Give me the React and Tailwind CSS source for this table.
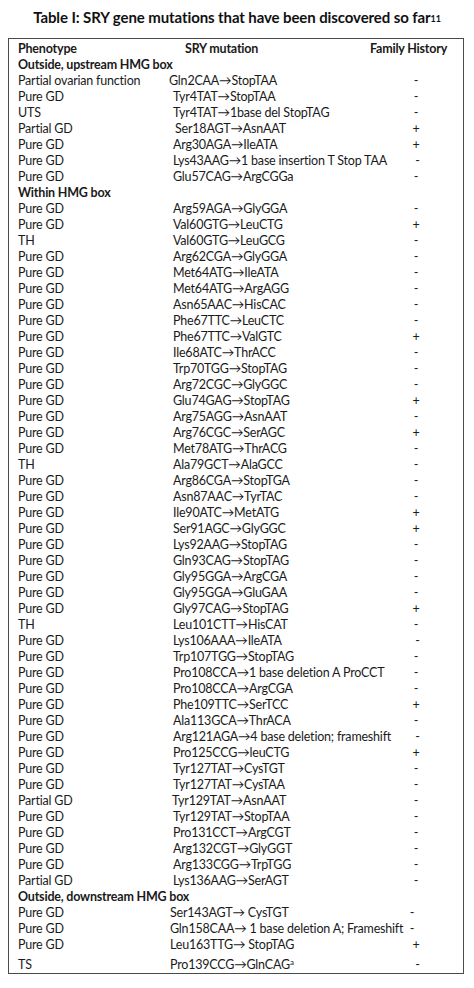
import React from "react";

const rows = [
  { t: "h", p: "Outside, upstream HMG box" },
  { p: "Partial ovarian function", m: "Gln2CAA→StopTAA", f: "-", mo: "ml-[-4px]" },
  { p: "Pure GD", m: "Tyr4TAT→StopTAA", f: "-" },
  { p: "UTS", m: "Tyr4TAT→1base del StopTAG", f: "-" },
  { p: "Partial GD", m: "Ser18AGT→AsnAAT", f: "+", mo: "ml-[2px]" },
  { p: "Pure GD", m: "Arg30AGA→IleATA", f: "+" },
  { p: "Pure GD", m: "Lys43AAG→1 base insertion T Stop TAA", f: "-", fo: "ml-[3px]" },
  { p: "Pure GD", m: "Glu57CAG→ArgCGGa", f: "-" },
  { t: "h", p: "Within HMG box" },
  { p: "Pure GD", m: "Arg59AGA→GlyGGA", f: "-" },
  { p: "Pure GD", m: "Val60GTG→LeuCTG", f: "+" },
  { p: "TH", m: "Val60GTG→LeuGCG", f: "-" },
  { p: "Pure GD", m: "Arg62CGA→GlyGGA", f: "-" },
  { p: "Pure GD", m: "Met64ATG→IleATA", f: "-" },
  { p: "Pure GD", m: "Met64ATG→ArgAGG", f: "-" },
  { p: "Pure GD", m: "Asn65AAC→HisCAC", f: "-" },
  { p: "Pure GD", m: "Phe67TTC→LeuCTC", f: "-" },
  { p: "Pure GD", m: "Phe67TTC→ValGTC", f: "+" },
  { p: "Pure GD", m: "Ile68ATC→ThrACC", f: "-" },
  { p: "Pure GD", m: "Trp70TGG→StopTAG", f: "-" },
  { p: "Pure GD", m: "Arg72CGC→GlyGGC", f: "-" },
  { p: "Pure GD", m: "Glu74GAG→StopTAG", f: "+" },
  { p: "Pure GD", m: "Arg75AGG→AsnAAT", f: "-" },
  { p: "Pure GD", m: "Arg76CGC→SerAGC", f: "+" },
  { p: "Pure GD", m: "Met78ATG→ThrACG", f: "-" },
  { p: "TH", m: "Ala79GCT→AlaGCC", f: "-" },
  { p: "Pure GD", m: "Arg86CGA→StopTGA", f: "-" },
  { p: "Pure GD", m: "Asn87AAC→TyrTAC", f: "-" },
  { p: "Pure GD", m: "Ile90ATC→MetATG", f: "+" },
  { p: "Pure GD", m: "Ser91AGC→GlyGGC", f: "+" },
  { p: "Pure GD", m: "Lys92AAG→StopTAG", f: "-" },
  { p: "Pure GD", m: "Gln93CAG→StopTAG", f: "-" },
  { p: "Pure GD", m: "Gly95GGA→ArgCGA", f: "-" },
  { p: "Pure GD", m: "Gly95GGA→GluGAA", f: "-" },
  { p: "Pure GD", m: "Gly97CAG→StopTAG", f: "+" },
  { p: "TH", m: "Leu101CTT→HisCAT", f: "-" },
  { p: "Pure GD", m: "Lys106AAA→IleATA", f: "-", fo: "ml-[3px]" },
  { p: "Pure GD", m: "Trp107TGG→StopTAG", f: "-" },
  { p: "Pure GD", m: "Pro108CCA→1 base deletion A ProCCT", f: "-" },
  { p: "Pure GD", m: "Pro108CCA→ArgCGA", f: "-" },
  { p: "Pure GD", m: "Phe109TTC→SerTCC", f: "+" },
  { p: "Pure GD", m: "Ala113GCA→ThrACA", f: "-" },
  { p: "Pure GD", m: "Arg121AGA→4 base deletion; frameshift", f: "-", fo: "ml-[3px]" },
  { p: "Pure GD", m: "Pro125CCG→leuCTG", f: "+" },
  { p: "Pure GD", m: "Tyr127TAT→CysTGT", f: "-" },
  { p: "Pure GD", m: "Tyr127TAT→CysTAA", f: "-" },
  { p: "Partial GD", m: "Tyr129TAT→AsnAAT", f: "-", mo: "ml-[-1px]" },
  { p: "Pure GD", m: "Tyr129TAT→StopTAA", f: "-" },
  { p: "Pure GD", m: "Pro131CCT→ArgCGT", f: "-" },
  { p: "Pure GD", m: "Arg132CGT→GlyGGT", f: "-" },
  { p: "Pure GD", m: "Arg133CGG→TrpTGG", f: "-" },
  { p: "Partial GD", m: "Lys136AAG→SerAGT", f: "-" },
  { t: "h", p: "Outside, downstream HMG box" },
  { p: "Pure GD", m: "Ser143AGT→ CysTGT", f: "-", mo: "ml-[-3px]", fo: "ml-[-8px]" },
  { p: "Pure GD", m: "Gln158CAA→ 1 base deletion A; Frameshift", f: "-", mo: "ml-[-3px]", fo: "ml-[-8px]" },
  { p: "Pure GD", m: "Leu163TTG→ StopTAG", f: "+", mo: "ml-[-3px]" },
];

export default function App() {
  return (
    <div
      className="w-[474px] h-[988px] bg-white text-[#1a1a1a] overflow-hidden"
      style={{ fontFamily: "Lato, 'Open Sans', sans-serif" }}
    >
      <div className="pt-[7px] h-[38px] text-center font-bold text-[15px] tracking-[-0.1px] leading-[20px] text-[#111]">
        Table I: SRY gene mutations that have been discovered so far
        <sup className="text-[9px] font-bold relative top-[-1px]">11</sup>
      </div>
      <div className="mx-[8px] w-[456px] h-[936px] border border-[#4a4a4a] pt-[2px] text-[12.5px] tracking-[-0.2px] leading-[16px]">
        <div className="flex h-[16px] font-bold">
          <div className="w-[164px] pl-[9px]">Phenotype</div>
          <div className="w-[197px] pl-[12px]">SRY mutation</div>
          <div className="flex-1">Family History</div>
        </div>
        {rows.map((r, i) =>
          r.t === "h" ? (
            <div key={i} className="h-[16px] pl-[9px] font-bold">
              {r.p}
            </div>
          ) : (
            <div key={i} className="flex h-[16px]">
              <div className="w-[164px] pl-[9px] whitespace-nowrap">{r.p}</div>
              <div className="w-[197px] whitespace-nowrap">
                <span className={"inline-block " + (r.mo || "")}>{r.m}</span>
              </div>
              <div className="w-[92px] flex justify-center">
                <span className={"inline-block " + (r.fo || "")}>{r.f}</span>
              </div>
            </div>
          )
        )}
        <div className="flex h-[16px] mt-[4px]">
          <div className="w-[164px] pl-[9px]">TS</div>
          <div className="w-[197px] whitespace-nowrap">
            <span className="inline-block ml-[-3px]">
              Pro139CCG→GlnCAG<sup className="text-[8px]">a</sup>
            </span>
          </div>
          <div className="w-[92px] flex justify-center">
            <span className="inline-block ml-[3px]">-</span>
          </div>
        </div>
      </div>
    </div>
  );
}
